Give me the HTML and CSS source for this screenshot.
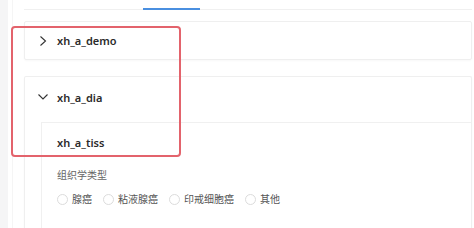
FILE: index.html
```html
<!DOCTYPE html>
<html lang="zh-CN">
<head>
    <meta charset="UTF-8">
    <meta name="viewport" content="width=device-width, initial-scale=1.0">
    <title>Form Sections</title>
    <link rel="stylesheet" href="styles.css">
</head>
<body>
    <div class="sidebar"></div>

    <div class="panel">
        <div class="tabs">
            <div class="tab active"></div>
        </div>

        <div class="card">
            <div class="card-head">
                <svg class="chevron" viewBox="0 0 10 10" width="10" height="10">
                    <path d="M2.5 0.5 L7.5 5 L2.5 9.5" fill="none" stroke="#333" stroke-width="1.1"/>
                </svg>
                <span class="card-title">xh_a_demo</span>
            </div>
        </div>

        <div class="card open">
            <div class="card-head">
                <svg class="chevron" viewBox="0 0 10 10" width="10" height="10">
                    <path d="M0.5 2.5 L5 7 L9.5 2.5" fill="none" stroke="#333" stroke-width="1.1"/>
                </svg>
                <span class="card-title">xh_a_dia</span>
            </div>
            <div class="card-body">
                <div class="sub-card">
                    <div class="sub-head">
                        <span class="card-title">xh_a_tiss</span>
                    </div>
                    <div class="field">
                        <div class="field-label">组织学类型</div>
                        <div class="radios">
                            <label class="radio"><span class="dot"></span>腺癌</label>
                            <label class="radio"><span class="dot"></span>粘液腺癌</label>
                            <label class="radio"><span class="dot"></span>印戒细胞癌</label>
                            <label class="radio"><span class="dot"></span>其他</label>
                        </div>
                    </div>
                </div>
            </div>
        </div>
    </div>

    <!-- highlight annotation -->
    <div class="highlight"></div>
</body>
</html>
```

FILE: styles.css
```css
* {
    margin: 0;
    padding: 0;
    box-sizing: border-box;
}

body {
    font-family: "Noto Sans", "Noto Sans CJK SC", sans-serif;
    color: #333;
    background: #fff;
    display: flex;
    height: 228px;
    overflow: hidden;
    position: relative;
}

.sidebar {
    width: 8px;
    background: #f5f5f6;
    flex-shrink: 0;
}

.panel {
    flex: 1;
    padding: 0 2px 0 11px;
    border-left: 1px solid #f5f5f5;
    margin-left: 4px;
}

/* Tabs */
.tabs {
    height: 10px;
    border-bottom: 1px solid #f0f0f0;
    display: flex;
}

.tab.active {
    width: 57px;
    margin-left: 119px;
    border-bottom: 2px solid #4a8fe0;
    margin-bottom: -1px;
}

/* Cards */
.card {
    border: 1px solid #efefef;
    border-radius: 2px;
    margin-top: 11px;
    box-shadow: 0 1px 2px rgba(0, 0, 0, 0.03);
}

.card.open {
    margin-top: 16px;
    border-bottom: none;
}

.card-head {
    height: 37px;
    display: flex;
    align-items: center;
    padding-left: 13px;
}

.card.open .card-head {
    height: 40px;
}

.chevron {
    margin-right: 9px;
}

.card-title {
    font-size: 11px;
    font-weight: 600;
    color: #2b2b2b;
}

.card-body {
    padding: 5px 0 0 16px;
}

.sub-card {
    border-top: 1px solid #f0f0f0;
    border-left: 1px solid #f0f0f0;
    padding-left: 15px;
}

.sub-head {
    height: 38px;
    display: flex;
    align-items: center;
}

/* Field */
.field {
    padding-top: 6px;
}

.field-label {
    font-size: 10px;
    color: #666;
    line-height: 16px;
}

.radios {
    display: flex;
    gap: 11px;
    margin-top: 8px;
    padding-bottom: 30px;
}

.radio {
    display: flex;
    align-items: center;
    font-size: 10px;
    color: #555;
    line-height: 16px;
}

.dot {
    width: 11px;
    height: 11px;
    border: 1px solid #dcdcdc;
    border-radius: 50%;
    margin-right: 4px;
}

/* Annotation overlay */
.highlight {
    position: absolute;
    left: 11px;
    top: 26px;
    width: 170px;
    height: 131px;
    border: 2px solid #e3636c;
    border-radius: 4px;
    pointer-events: none;
}
```
